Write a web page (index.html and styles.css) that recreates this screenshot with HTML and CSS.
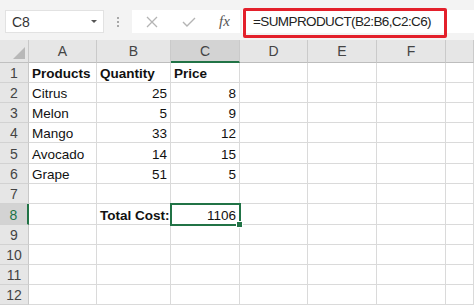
FILE: index.html
```html
<!DOCTYPE html>
<html lang="en">
<head>
    <meta charset="UTF-8">
    <title>SUMPRODUCT example</title>
    <link rel="stylesheet" href="styles.css">
</head>
<body>
    <div class="toolbar">
        <div class="namebox">
            <span>C8</span>
            <span class="caret"></span>
        </div>
        <div class="grip">
            <i></i><i></i><i></i>
        </div>
        <div class="fxbox">
            <svg width="14" height="14" viewBox="0 0 14 14"><path d="M2 2L12 12M12 2L2 12" stroke="#b4b4b4" stroke-width="1.3" fill="none"/></svg>
            <svg width="16" height="14" viewBox="0 0 16 14"><path d="M2 7L6 11L14 3" stroke="#b4b4b4" stroke-width="1.4" fill="none"/></svg>
            <span class="fx">fx</span>
        </div>
        <div class="formula">
            <span class="highlight"></span>
            =SUMPRODUCT(B2:B6,C2:C6)
        </div>
    </div>

    <div class="sheet">
        <div class="corner"><span class="tri"></span></div>
        <div class="colhead">A</div>
        <div class="colhead">B</div>
        <div class="colhead active">C</div>
        <div class="colhead">D</div>
        <div class="colhead">E</div>
        <div class="colhead">F</div>
        <div class="colhead"></div>

        <div class="rowhead">1</div>
        <div class="cell bold">Products</div>
        <div class="cell bold">Quantity</div>
        <div class="cell bold">Price</div>
        <div class="cell"></div><div class="cell"></div><div class="cell"></div><div class="cell"></div>

        <div class="rowhead">2</div>
        <div class="cell">Citrus</div>
        <div class="cell num">25</div>
        <div class="cell num">8</div>
        <div class="cell"></div><div class="cell"></div><div class="cell"></div><div class="cell"></div>

        <div class="rowhead">3</div>
        <div class="cell">Melon</div>
        <div class="cell num">5</div>
        <div class="cell num">9</div>
        <div class="cell"></div><div class="cell"></div><div class="cell"></div><div class="cell"></div>

        <div class="rowhead">4</div>
        <div class="cell">Mango</div>
        <div class="cell num">33</div>
        <div class="cell num">12</div>
        <div class="cell"></div><div class="cell"></div><div class="cell"></div><div class="cell"></div>

        <div class="rowhead">5</div>
        <div class="cell">Avocado</div>
        <div class="cell num">14</div>
        <div class="cell num">15</div>
        <div class="cell"></div><div class="cell"></div><div class="cell"></div><div class="cell"></div>

        <div class="rowhead">6</div>
        <div class="cell">Grape</div>
        <div class="cell num">51</div>
        <div class="cell num">5</div>
        <div class="cell"></div><div class="cell"></div><div class="cell"></div><div class="cell"></div>

        <div class="rowhead">7</div>
        <div class="cell"></div><div class="cell"></div><div class="cell"></div>
        <div class="cell"></div><div class="cell"></div><div class="cell"></div><div class="cell"></div>

        <div class="rowhead active">8</div>
        <div class="cell"></div>
        <div class="cell bold">Total Cost:</div>
        <div class="cell num selected">1106<span class="handle"></span></div>
        <div class="cell"></div><div class="cell"></div><div class="cell"></div><div class="cell"></div>

        <div class="rowhead">9</div>
        <div class="cell"></div><div class="cell"></div><div class="cell"></div>
        <div class="cell"></div><div class="cell"></div><div class="cell"></div><div class="cell"></div>

        <div class="rowhead">10</div>
        <div class="cell"></div><div class="cell"></div><div class="cell"></div>
        <div class="cell"></div><div class="cell"></div><div class="cell"></div><div class="cell"></div>

        <div class="rowhead">11</div>
        <div class="cell"></div><div class="cell"></div><div class="cell"></div>
        <div class="cell"></div><div class="cell"></div><div class="cell"></div><div class="cell"></div>

        <div class="rowhead">12</div>
        <div class="cell"></div><div class="cell"></div><div class="cell"></div>
        <div class="cell"></div><div class="cell"></div><div class="cell"></div><div class="cell"></div>
    </div>
</body>
</html>
```

FILE: styles.css
```css
body {
    margin: 0;
    padding: 0;
    font-family: "Liberation Sans", Arial, sans-serif;
    color: #111111;
    background-color: #ffffff;
    overflow: hidden;
}
.toolbar {
    height: 40px;
    background-color: #f3f3f3;
    display: flex;
    align-items: flex-start;
    padding-top: 10px;
    box-sizing: border-box;
}
.namebox {
    margin-left: 5px;
    width: 99px;
    height: 23px;
    box-sizing: border-box;
    background-color: #ffffff;
    border: 1px solid #e2e2e2;
    display: flex;
    align-items: center;
    justify-content: space-between;
    padding: 0 6px 0 6px;
    font-size: 14px;
    color: #333333;
}
.caret {
    width: 0;
    height: 0;
    border-left: 3px solid transparent;
    border-right: 3px solid transparent;
    border-top: 3px solid #555555;
}
.grip {
    width: 28px;
    height: 23px;
    display: flex;
    flex-direction: column;
    align-items: center;
    justify-content: center;
    gap: 2px;
}
.grip i {
    width: 2px;
    height: 2px;
    background-color: #a8a8a8;
}
.fxbox {
    width: 108px;
    height: 23px;
    background-color: #ffffff;
    display: flex;
    align-items: center;
    padding-left: 13px;
    gap: 22px;
    box-sizing: border-box;
}
.fx {
    font-family: "Liberation Serif", serif;
    font-style: italic;
    font-size: 15px;
    color: #555555;
}
.formula {
    position: relative;
    margin-left: 2px;
    flex: 1;
    height: 23px;
    background-color: #ffffff;
    padding-left: 11px;
    font-size: 13.5px;
    letter-spacing: -0.6px;
    line-height: 23px;
    color: #222222;
}
.highlight {
    position: absolute;
    left: 1px;
    top: -2px;
    width: 204px;
    height: 30px;
    box-sizing: border-box;
    border: 3px solid #e3202b;
    border-radius: 2px;
}
.sheet {
    display: grid;
    grid-template-columns: 29px 68px 74px 69px 68px 69px 69px 28px;
    grid-template-rows: 23px 20px 20px 20px 20px 21px 20px 20px 21px 20px 20px 20px 20px;
    font-size: 13.5px;
}
.corner {
    background-color: #e6e6e6;
    border-right: 1px solid #c8c8c8;
    border-bottom: 1px solid #c0c0c0;
    position: relative;
}
.tri {
    position: absolute;
    right: 3px;
    bottom: 3px;
    width: 0;
    height: 0;
    border-left: 12px solid transparent;
    border-bottom: 12px solid #b8b8b8;
}
.colhead {
    background-color: #e6e6e6;
    border-right: 1px solid #cacaca;
    border-bottom: 1px solid #bdbdbd;
    display: flex;
    align-items: center;
    justify-content: center;
    color: #444444;
    font-size: 14px;
}
.colhead.active {
    background-color: #d3d3d3;
    border-bottom: 2px solid #217346;
    color: #444444;
}
.rowhead {
    background-color: #e6e6e6;
    border-right: 1px solid #c8c8c8;
    border-bottom: 1px solid #d2d2d2;
    display: flex;
    align-items: flex-end;
    justify-content: center;
    padding-bottom: 1px;
    color: #444444;
    font-size: 14px;
}
.rowhead.active {
    background-color: #d3d3d3;
    border-right: 2px solid #217346;
    color: #217346;
}
.cell {
    border-right: 1px solid #dadada;
    border-bottom: 1px solid #dadada;
    display: flex;
    align-items: flex-end;
    padding: 0 3px 1px 3px;
    white-space: nowrap;
    overflow: visible;
    color: #111111;
}
.bold {
    font-weight: bold;
}
.num {
    justify-content: flex-end;
}
.selected {
    position: relative;
    outline: 2px solid #217346;
    outline-offset: -1px;
}
.handle {
    position: absolute;
    right: -4px;
    bottom: -4px;
    width: 5px;
    height: 5px;
    background-color: #217346;
    border: 1px solid #ffffff;
}
```
